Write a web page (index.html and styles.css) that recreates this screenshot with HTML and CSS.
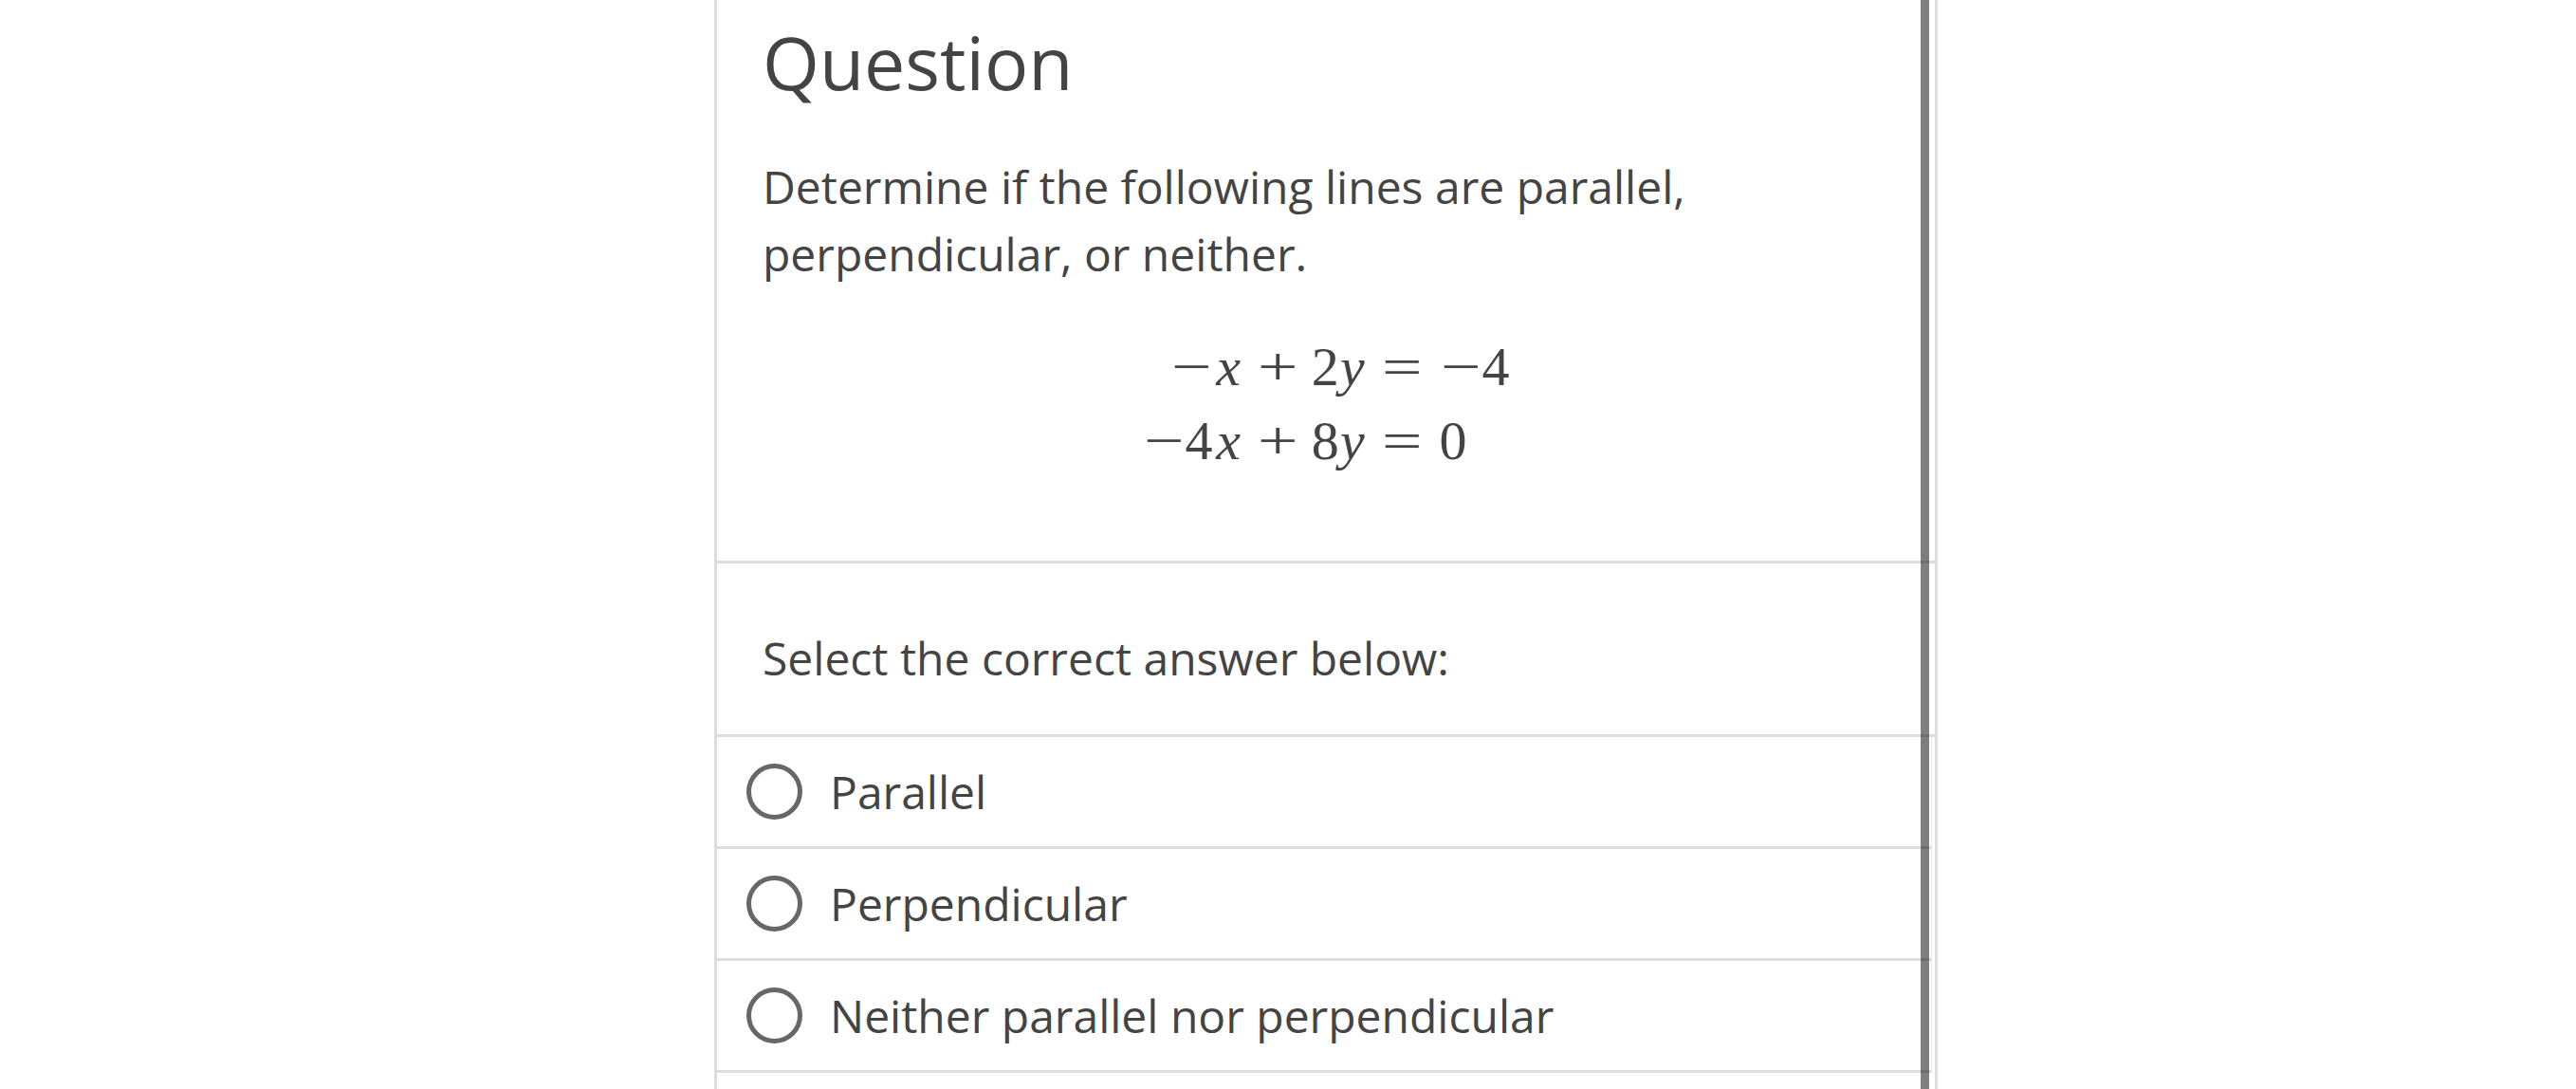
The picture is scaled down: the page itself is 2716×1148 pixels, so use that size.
FILE: index.html
```html
<!DOCTYPE html>
<html lang="en">
<head>
<meta charset="utf-8">
<title>Question</title>
<link rel="stylesheet" href="styles.css">
</head>
<body>
<div class="page">
  <div class="card">
    <section class="question">
      <h2 class="title">Question</h2>
      <p class="stem">Determine if the following lines are parallel, perpendicular, or neither.</p>
      <div class="math">
        <div class="eq-grid">
          <span class="lhs"><span class="mo"><span>−</span></span><span class="mi mx">x</span><span class="mo bin"><span>+</span></span><span class="mn">2</span><span class="mi my">y</span></span>
          <span class="rhs"><span class="mo rel"><span>=</span></span><span class="mo"><span>−</span></span><span class="mn">4</span></span>
          <span class="lhs"><span class="mo"><span>−</span></span><span class="mn">4</span><span class="mi mx">x</span><span class="mo bin"><span>+</span></span><span class="mn">8</span><span class="mi my">y</span></span>
          <span class="rhs"><span class="mo rel"><span>=</span></span><span class="mn">0</span></span>
        </div>
      </div>
    </section>
    <div class="prompt">Select the correct answer below:</div>
    <div class="options">
      <div class="option"><span class="radio"></span><span class="label">Parallel</span></div>
      <div class="option"><span class="radio"></span><span class="label">Perpendicular</span></div>
      <div class="option"><span class="radio"></span><span class="label">Neither parallel nor perpendicular</span></div>
    </div>
    <div class="scroll-thumb"></div>
  </div>
</div>
</body>
</html>
```

FILE: styles.css
```css
html, body {
  margin: 0;
  padding: 0;
  background: #ffffff;
}

body {
  font-family: "Open Sans", "Noto Sans", sans-serif;
  color: #444444;
  overflow: hidden;
}

.page {
  padding-left: 753px;
}

.card {
  position: relative;
  width: 1284px;
  border-left: 3px solid #dddddd;
  border-right: 3px solid #dddddd;
  padding-bottom: 80px;
}

.question {
  padding: 20px 48px 87px 48px;
}

.title {
  margin: 0;
  font-size: 77px;
  line-height: 92px;
  font-weight: 400;
  color: #444444;
}

.stem {
  margin: 49px 0 0 0;
  font-size: 48px;
  line-height: 71px;
}

.math {
  margin-top: 45px;
  display: flex;
  justify-content: center;
  font-family: "Liberation Serif", "DejaVu Serif", serif;
  font-size: 58px;
  line-height: 78px;
  color: #444444;
}

.eq-grid {
  display: grid;
  grid-template-columns: auto auto;
}

.lhs {
  text-align: right;
  white-space: nowrap;
}

.rhs {
  text-align: left;
  white-space: nowrap;
}

.mo {
  display: inline-block;
  width: 0.778em;
  text-align: center;
}

.mo > span {
  display: inline-block;
  transform: scaleX(1.3);
}

.mi {
  display: inline-block;
  font-style: italic;
  text-align: center;
}

.mx {
  width: 0.572em;
}

.my {
  width: 0.49em;
}

.mn {
  display: inline-block;
  width: 0.5em;
  text-align: center;
}

.bin {
  margin: 0 0.222em;
}

.rel {
  margin: 0 0.278em;
}

.prompt {
  border-top: 3px solid #dddddd;
  border-bottom: 3px solid #dddddd;
  padding: 64px 48px 45px 48px;
  font-size: 48px;
  line-height: 71px;
}

.options {
  margin-right: 3px;
  border-right: 1px solid #e8e8e8;
}

.option {
  display: flex;
  align-items: center;
  gap: 29px;
  padding: 22px 31px;
  border-bottom: 3px solid #dddddd;
  font-size: 48px;
  line-height: 71px;
}

.radio {
  flex: none;
  width: 59px;
  height: 59px;
  box-sizing: border-box;
  border: 5px solid #676767;
  border-radius: 50%;
}

.scroll-thumb {
  position: absolute;
  top: 0;
  bottom: 0;
  right: 6px;
  width: 9px;
  background: rgba(0, 0, 0, 0.5);
}
```
